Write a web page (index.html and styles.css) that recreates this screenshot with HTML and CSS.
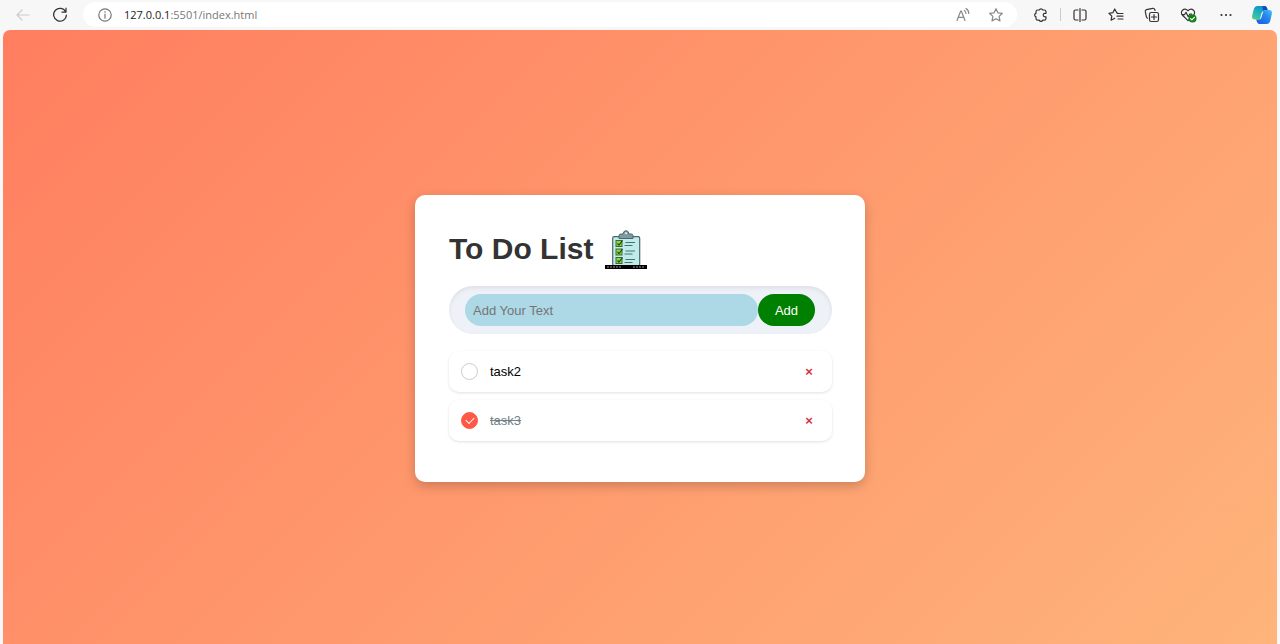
FILE: index.html
```html
<!DOCTYPE html>
<html lang="en">
<head>
<meta charset="utf-8">
<meta name="viewport" content="width=device-width, initial-scale=1">
<title>To Do List</title>
<link rel="stylesheet" href="styles.css">
</head>
<body>
<header class="toolbar">
  <button class="tool back" type="button" aria-label="Back" disabled>
    <svg width="16" height="16" viewBox="0 0 16 16"><path d="M14 8H2M7 3 2 8l5 5"/></svg>
  </button>
  <button class="tool reload" type="button" aria-label="Refresh">
    <svg width="16" height="16" viewBox="0 0 16 16"><path d="M13.800 5A6.400 6.400 0 1 0 14.400 8M14 1.200V5.200H10"/></svg>
  </button>
  <div class="address">
    <button class="tool info" type="button" aria-label="Site information">
      <svg width="14" height="14" viewBox="0 0 14 14"><circle cx="7" cy="7" r="6.200"/><path d="M7 6.200v4M7 3.600v.6"/></svg>
    </button>
    <p class="url"><span class="host">127.0.0.1</span>:5501/index.html</p>
    <button class="tool soft" type="button" aria-label="Read aloud">
      <svg width="16" height="16" viewBox="0 0 16 16"><path d="M2 13.500 5.700 4h.6L10 13.500M3.300 10.300h5.400M9.300 3.500q1.500 1 1.700 3M11 1.500q2.800 1.800 2.800 5"/></svg>
    </button>
    <button class="tool soft" type="button" aria-label="Add to favorites">
      <svg width="16" height="16" viewBox="0 0 16 16"><path d="m8 1.700 1.900 4.100 4.500.5-3.300 3.100.9 4.500L8 11.700l-4 2.200.9-4.500L1.600 6.300l4.500-.5z"/></svg>
    </button>
  </div>
  <nav class="tools" aria-label="Browser tools">
    <button class="tool" type="button" aria-label="Extensions">
      <svg width="16" height="16" viewBox="0 0 16 16"><path d="M4.800 3h1.500a1.800 1.800 0 0 1 3.400 0h1.500q1.800 0 1.800 1.800v1.500h-1a1.800 1.800 0 0 0 0 3.600h1v1.500q0 1.800-1.800 1.800H9.700a1.800 1.800 0 0 1-3.400 0H4.800Q3 13.200 3 11.400V9.800a1.800 1.800 0 0 1 0-3.500V4.800Q3 3 4.800 3z"/></svg>
    </button>
    <span class="divider"></span>
    <button class="tool" type="button" aria-label="Split screen">
      <svg width="16" height="16" viewBox="0 0 16 16"><path d="M6 3H3.500Q2 3 2 4.500v7Q2 13 3.500 13H6M10 3h2.500Q14 3 14 4.500v7q0 1.500-1.500 1.500H10M8 1.500v13"/></svg>
    </button>
    <button class="tool" type="button" aria-label="Favorites">
      <svg width="16" height="16" viewBox="0 0 16 16"><path d="M9.700 6H8.900L6.700 2 4.900 5.700.9 6.300 3.800 9.100 3.100 13.200 6.700 11.300M9.500 6.500H15M9 9.200h6M10 12h5"/></svg>
    </button>
    <button class="tool" type="button" aria-label="Collections">
      <svg width="16" height="16" viewBox="0 0 16 16"><rect x="5.500" y="5.500" width="9" height="9" rx="1.800"/><path d="M10 7.500v5M7.500 10h5M3.500 11.200Q2.600 10.800 2.400 9.800L1.300 4.700Q1 3.100 2.500 2.700L8.700 1.300q1.500-.3 2 1.200l.3 1"/></svg>
    </button>
    <button class="tool" type="button" aria-label="Browser essentials">
      <svg width="18" height="16" viewBox="0 0 18 16"><path d="M8 13.600 2.500 8.200C-.8 4.800 4 0 8 3.700c4-3.700 8.800 1.100 5.500 4.500zM2 7.700h2.500L6 5.200l2.200 4.500 1.500-2.500h2"/><circle class="ok" cx="12.500" cy="11.500" r="4"/><path class="ok-mark" d="m10.600 11.600 1.300 1.300 2.500-2.600"/></svg>
    </button>
    <button class="tool more" type="button" aria-label="Settings and more">
      <svg width="16" height="16" viewBox="0 0 16 16"><circle cx="3.500" cy="8" r="1.100"/><circle cx="8" cy="8" r="1.100"/><circle cx="12.500" cy="8" r="1.100"/></svg>
    </button>
    <button class="tool copilot" type="button" aria-label="Copilot">
      <svg width="22" height="20" viewBox="0 0 22 20">
        <defs>
          <linearGradient id="green" x1="0" y1="1" x2=".5" y2="0"><stop offset="0" stop-color="#5ecb7c"/><stop offset=".5" stop-color="#20b9b5"/><stop offset="1" stop-color="#168fd0"/></linearGradient>
          <linearGradient id="blue" x1="0" y1="1" x2="1" y2="0"><stop offset="0" stop-color="#1657e2"/><stop offset=".6" stop-color="#2588ee"/><stop offset="1" stop-color="#42c5f5"/></linearGradient>
        </defs>
        <path fill="url(#green)" d="M6.500 1h7Q15.300 1 16 3l.6 2H14q-1.600 0-2.200 1.900l-1.600 5.700Q9.600 14.500 7.500 14.500H4Q.4 14.500 1.200 10.500L2.700 4.500Q3.500 1 6.500 1z"/>
        <path fill="url(#blue)" d="M15.500 19h-7Q6.700 19 6 17l-.8-2.500H8q1.600 0 2.200-1.900L11.800 7Q12.500 5 14.500 5H18q3.600 0 2.800 4l-1.500 6.500Q18.500 19 15.500 19z"/>
        <path fill="#1749bd" d="M11.500 1h2Q15.300 1 16 3l.6 2H14q-1.200 0-1.900 1z"/>
        <path fill="#f7f7f7" d="M12.300 6.200 10.200 13q-.5 1.200-1.200 1.400l1.200-5.200q.6-2.300 2.100-3z"/>
      </svg>
    </button>
  </nav>
</header>
<main class="page">
  <section class="card">
    <h1 class="title">To Do List
      <svg class="clipboard" width="42" height="40" viewBox="0 0 42 40" aria-hidden="true">
        <rect x="7.700" y="6.700" width="27" height="29" rx="1.500" fill="#bdece9" stroke="#4d666b" stroke-width="1.200"/>
        <path d="M14 8.500V5.500q0-1.500 2-1.500h2Q18.500.7 21 .7T24 4h2q2 0 2 1.500v3z" fill="#8199a2" stroke="#4d666b"/>
        <circle cx="21" cy="3.300" r="1" fill="#edf6f7"/>
        <g fill="#8fd83b" stroke="#3c6638"><rect x="11" y="10.500" width="6" height="6"/><rect x="11" y="19" width="6" height="6"/><rect x="11" y="27.500" width="6" height="6"/></g>
        <path d="m12.500 13.500 1.500 1.500 3.500-4.500m-5 11.500 1.500 1.500 3.500-4.500m-5 11.500 1.500 1.500 3.500-4.500" fill="none" stroke="#1f4a1c" stroke-width="1.200"/>
        <path d="M20.500 12.500h9.500M19.500 15.500h8M20.500 21h9.500M19.500 24h8M20.500 29.500h9.500M19.500 32.500h8" stroke="#4a7076"/>
        <path d="M0 35h42v4H0z" fill="#000"/>
        <path d="M2 37h15M28 37h11" stroke="#999" stroke-dasharray="2 1"/>
      </svg>
    </h1>
    <form class="entry">
      <input class="entry-text" type="text" placeholder="Add Your Text" aria-label="New task">
      <button class="entry-add" type="button">Add</button>
    </form>
    <ul class="tasks">
      <li class="task">
        <input class="task-check" type="checkbox" id="task2">
        <label class="task-name" for="task2">task2</label>
        <button class="task-delete" type="button" aria-label="Delete task2">×</button>
      </li>
      <li class="task">
        <input class="task-check" type="checkbox" id="task3" checked>
        <label class="task-name" for="task3">task3</label>
        <button class="task-delete" type="button" aria-label="Delete task3">×</button>
      </li>
    </ul>
  </section>
</main>
</body>
</html>
```
FILE: styles.css
```css
* {
  box-sizing: border-box;
}

body {
  display: flex;
  flex-direction: column;
  height: 100vh;
  margin: 0;
  background: #f7f7f7;
  font-family: "Liberation Sans", Arial, sans-serif;
}

button {
  border: 0;
  font: inherit;
  cursor: pointer;
}

.toolbar {
  display: flex;
  align-items: center;
  height: 30px;
  padding: 1px 7px 2px 15px;
}

.tool {
  display: flex;
  padding: 0;
  background: none;
  color: #333;
}

.tool svg {
  fill: none;
  stroke: currentColor;
  stroke-linecap: round;
  stroke-linejoin: round;
  stroke-width: 1.2;
}

.back {
  color: #ccc;
}

.reload {
  margin: 0 15px 0 21px;
}

.address {
  display: flex;
  flex: 1;
  align-items: center;
  gap: 17px;
  height: 25px;
  padding: 0 13px 0 15px;
  border-radius: 13px;
  background: #fff;
}

.info {
  color: #777;
}

.url {
  flex: 1;
  margin: 0 0 0 -5px;
  color: #777;
  font-family: "Open Sans", "Noto Sans", sans-serif;
  font-size: 11px;
  line-height: 16px;
}

.host {
  color: #222;
}

.soft {
  color: #888;
}

.tools {
  display: flex;
  align-items: center;
  gap: 20px;
  padding-left: 16px;
}

.divider {
  width: 1px;
  height: 13px;
  margin: 0 -9px;
  background: #ccc;
}

.more svg {
  fill: currentColor;
  stroke: none;
}

.copilot svg {
  stroke: none;
}

.copilot {
  margin-left: -3px;
}

.tool .ok {
  fill: #118016;
  stroke: none;
}

.tool .ok-mark {
  stroke: #fff;
}

.page {
  display: flex;
  flex: 1;
  align-items: center;
  justify-content: center;
  margin: 0 3px;
  padding-top: 3px;
  border-radius: 7px 7px 0 0;
  background: linear-gradient(135deg, #ff7e5f, #feb47b);
}

.card {
  width: 100%;
  max-width: 450px;
  padding: 33px 33px 41px 34px;
  border-radius: 10px;
  background: #fff;
  box-shadow: 0 4px 12px rgba(0, 0, 0, 0.2);
}

.title {
  display: flex;
  align-items: center;
  gap: 12px;
  margin: 0 0 16px;
  color: #333;
  font-size: 30px;
  line-height: 42px;
}

.clipboard {
  margin-top: 2px;
}

.entry {
  display: flex;
  margin-bottom: 17px;
  padding: 8px 17px 8px 16px;
  border-radius: 24px;
  background: #eef2f8;
  box-shadow: inset 0 2px 4px rgba(0, 0, 0, 0.08);
}

.entry-text {
  flex: 1;
  min-width: 0;
  height: 32px;
  padding: 0 8px;
  border: 0;
  border-radius: 16px;
  background: lightblue;
  font: inherit;
  font-size: 13px;
}

.entry-text::placeholder {
  color: #757575;
}

.entry-add {
  width: 57px;
  padding: 0;
  border-radius: 16px;
  background: green;
  color: #fff;
  font-size: 13px;
}

.tasks {
  display: grid;
  gap: 8px;
  margin: 0;
  padding: 0;
  list-style: none;
}

.task {
  display: flex;
  align-items: center;
  height: 41px;
  padding: 0 18px 0 12px;
  border-radius: 10px;
  box-shadow: 0 1px 3px rgba(0, 0, 0, 0.12);
  font-size: 13px;
}

.task-check {
  display: grid;
  place-items: center;
  width: 17px;
  height: 17px;
  margin: 0;
  border: 1px solid #ccc;
  border-radius: 50%;
  appearance: none;
}

.task-check:checked {
  border-color: #ff5945;
  background: #ff5945;
}

.task-check:checked::after {
  width: 7px;
  height: 4px;
  margin-bottom: 2px;
  border: solid #fff;
  border-width: 0 0 1px 1px;
  content: "";
  rotate: -45deg;
}

.task-name {
  flex: 1;
  margin-left: 12px;
}

.task-check:checked + .task-name {
  color: #718086;
  text-decoration: line-through;
}

.task-delete {
  width: 10px;
  padding: 0;
  background: none;
  color: #d32f3f;
  font-size: 13px;
  font-weight: bold;
  line-height: 16px;
}
```
